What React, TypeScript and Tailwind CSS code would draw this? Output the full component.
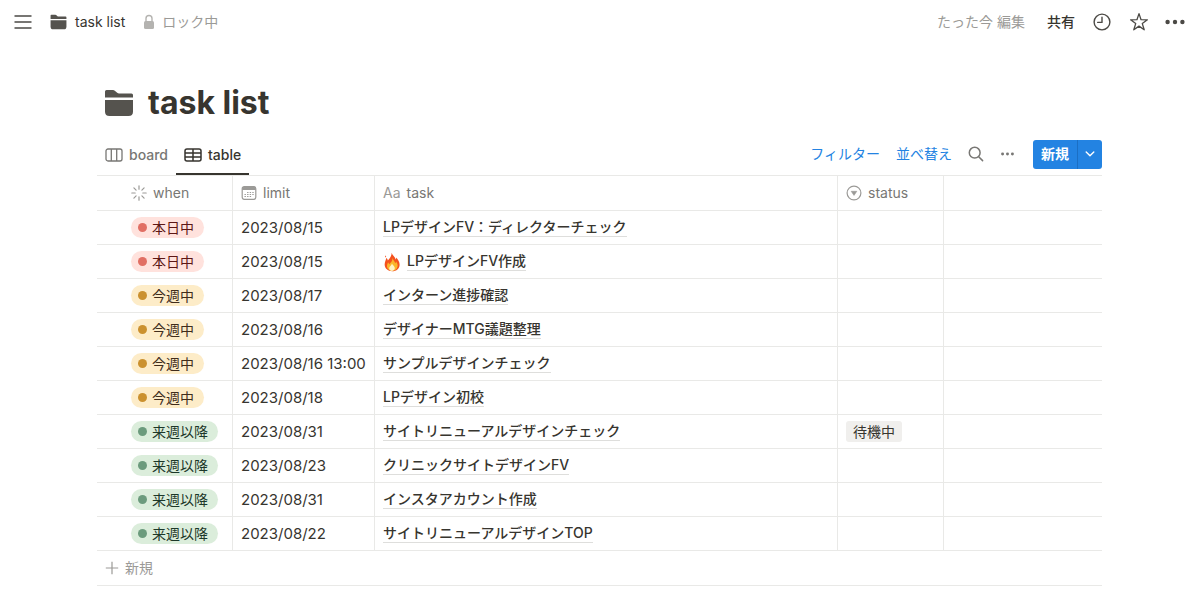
import React from 'react';

type When = 'today' | 'week' | 'later';

interface Task {
  when: When;
  limit: string;
  title: string;
  hot?: boolean;
  status?: string;
}

const tasks: Task[] = [
  { when: 'today', limit: '2023/08/15', title: 'LPデザインFV：ディレクターチェック' },
  { when: 'today', limit: '2023/08/15', title: 'LPデザインFV作成', hot: true },
  { when: 'week', limit: '2023/08/17', title: 'インターン進捗確認' },
  { when: 'week', limit: '2023/08/16', title: 'デザイナーMTG議題整理' },
  { when: 'week', limit: '2023/08/16 13:00', title: 'サンプルデザインチェック' },
  { when: 'week', limit: '2023/08/18', title: 'LPデザイン初校' },
  { when: 'later', limit: '2023/08/31', title: 'サイトリニューアルデザインチェック', status: '待機中' },
  { when: 'later', limit: '2023/08/23', title: 'クリニックサイトデザインFV' },
  { when: 'later', limit: '2023/08/31', title: 'インスタアカウント作成' },
  { when: 'later', limit: '2023/08/22', title: 'サイトリニューアルデザインTOP' },
];

const whenStyles: Record<When, { label: string; pill: string; dot: string }> = {
  today: { label: '本日中', pill: 'bg-[#ffe2dd] text-[#5d1715]', dot: 'bg-[#e16f64]' },
  week: { label: '今週中', pill: 'bg-[#fdecc8] text-[#402c1b]', dot: 'bg-[#cb912f]' },
  later: { label: '来週以降', pill: 'bg-[#dbeddb] text-[#1c3829]', dot: 'bg-[#6c9b7d]' },
};

function FolderIcon({ className }: { className: string }) {
  return (
    <svg viewBox="0 0 30 28" className={className} fill="currentColor" aria-hidden="true">
      <path d="M1 8.500V2.500Q1 1 2.500 1H9q1 0 1.800.7l2.400 2q.8.700 1.800.7h12.500Q29 4.400 29 5.900v2.600z" />
      <path d="M1 11h28v11.500q0 4.500-4.500 4.500h-19Q1 27 1 22.500z" />
    </svg>
  );
}

function MenuIcon() {
  return (
    <svg viewBox="0 0 18 16" className="h-4 w-[18px]" stroke="currentColor" strokeWidth="1.400" aria-hidden="true">
      <path d="M.5 2h17M.5 8h17M.5 14h17" />
    </svg>
  );
}

function LockIcon() {
  return (
    <svg viewBox="0 0 12 16" className="h-4 w-3" aria-hidden="true">
      <rect x="1" y="7" width="10" height="8" rx="1.500" fill="currentColor" />
      <path d="M3 7.500V4.500a3 3 0 0 1 6 0v3" fill="none" stroke="currentColor" strokeWidth="1.400" />
    </svg>
  );
}

function ClockIcon() {
  return (
    <svg viewBox="0 0 18 18" className="size-[18px]" fill="none" stroke="currentColor" strokeWidth="1.400" aria-hidden="true">
      <circle cx="9" cy="9" r="7.900" />
      <path d="M9 4.300v5.100H4.700" strokeLinecap="round" strokeLinejoin="round" />
    </svg>
  );
}

function StarIcon() {
  return (
    <svg viewBox="0 0 20 20" className="size-5" fill="none" stroke="currentColor" strokeWidth="1.300" strokeLinejoin="round" aria-hidden="true">
      <path d="M10 1.600l2.050 6.100 6.350.1-5.100 3.800 1.900 6.200L10 14.100l-5.200 3.700 1.900-6.200-5.100-3.800 6.350-.1z" />
    </svg>
  );
}

function DotsIcon({ className }: { className: string }) {
  return (
    <svg viewBox="0 0 20 6" className={className} fill="currentColor" aria-hidden="true">
      <circle cx="2.600" cy="3" r="2.200" />
      <circle cx="10" cy="3" r="2.200" />
      <circle cx="17.400" cy="3" r="2.200" />
    </svg>
  );
}

function BoardIcon() {
  return (
    <svg viewBox="0 0 18 14" className="h-3.5 w-[18px]" fill="none" stroke="currentColor" strokeWidth="1.300" aria-hidden="true">
      <rect x="1" y="1" width="16" height="12" rx="2" />
      <path d="M6.300 1v12M11.700 1v12" />
    </svg>
  );
}

function TableIcon() {
  return (
    <svg viewBox="0 0 18 14" className="h-3.5 w-[18px]" fill="none" stroke="currentColor" strokeWidth="1.500" aria-hidden="true">
      <rect x="1" y="1" width="16" height="12" rx="2" />
      <path d="M1 5h16M1 9h16M9 1v12" />
    </svg>
  );
}

function SearchIcon() {
  return (
    <svg viewBox="0 0 16 16" className="size-4" fill="none" stroke="currentColor" strokeWidth="1.500" strokeLinecap="round" aria-hidden="true">
      <circle cx="6.700" cy="6.700" r="5.400" />
      <path d="M10.700 10.700l3.900 3.900" />
    </svg>
  );
}

function SpinnerIcon() {
  return (
    <svg viewBox="0 0 16 16" className="size-4" fill="none" stroke="currentColor" strokeWidth="1.200" strokeLinecap="round" aria-hidden="true">
      <path d="M8 .8v3.400M8 11.800v3.400M.8 8h3.400M11.800 8h3.400M2.900 2.900l2.200 2.200M10.900 10.900l2.200 2.200M2.900 13.100l2.200-2.200M10.900 5.100l2.200-2.200" />
    </svg>
  );
}

function CalendarIcon() {
  return (
    <svg viewBox="0 0 16 16" className="size-4" aria-hidden="true">
      <rect x="1.200" y="1.700" width="13.600" height="12.600" rx="2" fill="none" stroke="currentColor" strokeWidth="1.200" />
      <path d="M1.200 5V3.500q0-1.800 1.800-1.800h10q1.800 0 1.800 1.800V5z" fill="currentColor" />
      <path d="M6.100 7.500h6.800M3.500 9.500h9.400M3.500 11.500h6.800" stroke="currentColor" strokeWidth="1" strokeDasharray="1.400 1.200" />
    </svg>
  );
}

function SelectIcon() {
  return (
    <svg viewBox="0 0 16 16" className="size-4" aria-hidden="true">
      <circle cx="8" cy="8" r="6.900" fill="none" stroke="currentColor" strokeWidth="1.200" />
      <path d="M5.200 6.300h5.600L8 10.400z" fill="currentColor" stroke="currentColor" strokeWidth=".6" strokeLinejoin="round" />
    </svg>
  );
}

function FireIcon() {
  return (
    <svg viewBox="0 0 18 20" className="h-5 w-[18px]" role="img" aria-label="fire">
      <path d="M8.700.8c.5 2.300 3.200 3.700 4 6.700.4-.6.500-1.200.4-2 2.200 2 3.900 5 3.400 8.200-.5 3.400-3.500 5.500-7.200 5.500-4 0-7.200-2.200-7.600-5.900C1.400 10.200 3 8.400 3.200 6c1 .5 1.500 1.400 1.600 2.500C6.500 6.800 8.600 4.200 8.700.8z" fill="#f4511e" />
      <path d="M2.500 3.500c.7.500.8 1.200.3 2-.8-.6-.9-1.300-.3-2z" fill="#f4511e" />
      <path d="M9.500 6c.2 2 2.300 3 2.700 5.200.5-.4.800-1 .8-1.700 1.300 1.500 2 3.300 1.500 5.300-.6 2.500-2.800 3.900-5.300 3.900-2.800 0-5-1.600-5.200-4.200-.1-1.700.7-2.900 1-4.300.7.500 1 1.200 1.100 2C7.700 10.900 9.700 8.800 9.500 6z" fill="#fbb52a" />
      <path d="M9 11.500c.2 1.500 2.800 2.400 2.800 4.600 0 1.800-1.100 2.800-2.700 2.800s-2.900-1-2.900-2.700c0-1.900 2.400-2.700 2.800-4.700z" fill="#fff3c4" />
    </svg>
  );
}

function ColumnHead({ icon, label, className }: { icon: React.ReactNode; label: string; className: string }) {
  return (
    <th scope="col" className={`border-b border-[#e9e9e7] p-0 font-normal text-[#787774] ${className}`}>
      <div className="flex items-center gap-1.5">
        <span className="text-[#9b9a97]">{icon}</span>
        {label}
      </div>
    </th>
  );
}

function TaskRow({ task }: { task: Task }) {
  const when = whenStyles[task.when];
  return (
    <tr className="h-[34px]">
      <td className="border-r border-b border-[#e9e9e7] p-0 pl-[34px]">
        <span className={`flex h-[21px] w-fit items-center gap-[5px] rounded-full pr-2.5 pl-[7px] ${when.pill}`}>
          <span className={`size-[9px] rounded-full ${when.dot}`} />
          {when.label}
        </span>
      </td>
      <td className="border-r border-b border-[#e9e9e7] p-0 pl-2 text-[15px] whitespace-nowrap">{task.limit}</td>
      <td className="border-r border-b border-[#e9e9e7] p-0 pl-2 font-medium">
        <div className="flex items-center gap-1.5">
          {task.hot && <FireIcon />}
          <a href="#" className="border-b border-[#dededc] leading-[18px]">{task.title}</a>
        </div>
      </td>
      <td className="border-r border-b border-[#e9e9e7] p-0 pl-2">
        {task.status && (
          <span className="flex h-[21px] w-fit items-center rounded-[3px] bg-[#f0efed] px-[7px]">{task.status}</span>
        )}
      </td>
      <td className="border-b border-[#e9e9e7] p-0" />
    </tr>
  );
}

export default function App() {
  return (
    <div className="min-h-screen bg-white font-[Inter,'Noto_Sans_CJK_JP',sans-serif] text-sm text-[#37352f]">
      {/* Top bar */}
      <header className="flex h-11 items-center justify-between pr-[15px] pl-3.5">
        <div className="flex items-center">
          <button type="button" aria-label="menu" className="text-[#4b4945]"><MenuIcon /></button>
          <a href="#" className="ml-[18px] flex items-center gap-2">
            <FolderIcon className="h-4 w-[17px] text-[#55534e]" />
            task list
          </a>
          <span className="ml-[18px] flex items-center gap-[7px] text-[#9b9a97]">
            <span className="text-[#b4b3b0]"><LockIcon /></span>
            ロック中
          </span>
        </div>
        <div className="flex items-center text-[#4b4945]">
          <span className="text-[#9b9a97]">たった今 編集</span>
          <button type="button" className="ml-[22px] font-medium text-[#37352f]">共有</button>
          <button type="button" aria-label="history" className="ml-[18px]"><ClockIcon /></button>
          <button type="button" aria-label="favorite" className="ml-[18px]"><StarIcon /></button>
          <button type="button" aria-label="more" className="ml-4"><DotsIcon className="h-1.5 w-5" /></button>
        </div>
      </header>

      <main className="pt-10 pr-[98px] pl-[97px]">
        <div className="flex items-center gap-[14px] pt-px pl-[7px]">
          <FolderIcon className="h-7 w-[30px] text-[#55534e]" />
          <h1 className="text-[32px] leading-9 font-bold">task list</h1>
        </div>

        {/* View tabs and controls */}
        <div className="mt-3 flex h-[43px] items-center justify-between border-b border-[#e9e9e7]">
          <nav className="flex self-stretch font-medium">
            <a href="#" className="flex items-center gap-1.5 px-2 pt-0.5 text-[#787774]">
              <BoardIcon />
              board
            </a>
            <a href="#" aria-current="page" className="flex items-center gap-1.5 border-b-2 border-[#37352f] px-2 pt-1">
              <TableIcon />
              table
            </a>
          </nav>
          <div className="flex items-center">
            <button type="button" className="text-[#2383e2]">フィルター</button>
            <button type="button" className="ml-4 text-[#2383e2]">並べ替え</button>
            <button type="button" aria-label="search" className="ml-4 text-[#787774]"><SearchIcon /></button>
            <button type="button" aria-label="view options" className="ml-4 text-[#787774]"><DotsIcon className="h-1 w-[15px]" /></button>
            <div className="ml-[18px] flex h-[29px] rounded-[3px] bg-[#2383e2] text-white">
              <button type="button" className="border-r border-[#1b6fc4] px-2 font-semibold">新規</button>
              <button type="button" aria-label="templates" className="px-[7px]">
                <svg viewBox="0 0 10 6" className="h-1.5 w-2.5" fill="none" stroke="currentColor" strokeWidth="1.400" strokeLinecap="round" strokeLinejoin="round">
                  <path d="M1.200 1L5 4.800 8.800 1" />
                </svg>
              </button>
            </div>
          </div>
        </div>

        <table className="w-full table-fixed border-separate border-spacing-0 text-left">
          <thead>
            <tr className="h-[35px]">
              <ColumnHead icon={<SpinnerIcon />} label="when" className="w-[136px] border-r pl-[34px]" />
              <ColumnHead icon={<CalendarIcon />} label="limit" className="w-[142px] border-r pl-2" />
              <ColumnHead icon="Aa" label="task" className="w-[463px] border-r pl-2" />
              <ColumnHead icon={<SelectIcon />} label="status" className="w-[106px] border-r pl-2" />
              <th className="border-b border-[#e9e9e7] p-0" />
            </tr>
          </thead>
          <tbody>
            {tasks.map((task, i) => (
              <TaskRow key={i} task={task} />
            ))}
          </tbody>
        </table>
        <button type="button" className="flex h-[35px] w-full items-center gap-1.5 border-b border-[#e9e9e7] pl-2 text-[#9b9a97]">
          <svg viewBox="0 0 14 14" className="size-3.5" stroke="currentColor" strokeWidth="1.200" aria-hidden="true">
            <path d="M7 .8v12.400M.8 7h12.400" />
          </svg>
          新規
        </button>
      </main>
    </div>
  );
}
